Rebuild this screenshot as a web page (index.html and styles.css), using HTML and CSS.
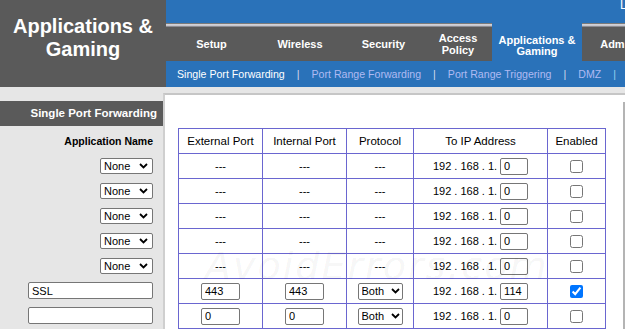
FILE: index.html
```html
<!DOCTYPE html>
<html>
<head>
  <meta charset="utf-8">
  <link rel="stylesheet" href="styles.css">
</head>
<body>
  <div class="header">
    <div class="page-title">Applications &amp;<br>Gaming</div>
    <div class="nav">
      <div class="brand-strip">Linksys E1200</div>
      <div class="tabs">
        <div class="tab tab-setup">Setup</div>
        <div class="tab tab-wireless">Wireless</div>
        <div class="tab tab-security">Security</div>
        <div class="tab tab-access">Access<br>Policy</div>
        <div class="tab tab-apps active">Applications &amp;<br>Gaming</div>
        <div class="tab tab-admin">Administration</div>
      </div>
      <div class="subnav">
        <span class="sub current">Single Port Forwarding</span>
        <span class="sep">|</span>
        <span class="sub">Port Range Forwarding</span>
        <span class="sep">|</span>
        <span class="sub">Port Range Triggering</span>
        <span class="sep">|</span>
        <span class="sub">DMZ</span>
        <span class="sep sep-last">|</span>
        <span class="sub">QoS</span>
      </div>
    </div>
  </div>

  <div class="main">
    <div class="side">
      <div class="side-title">Single Port Forwarding</div>
      <div class="side-row side-head">Application Name</div>
      <div class="side-row"><select class="app-select"><option>None</option></select></div>
      <div class="side-row"><select class="app-select"><option>None</option></select></div>
      <div class="side-row"><select class="app-select"><option>None</option></select></div>
      <div class="side-row"><select class="app-select"><option>None</option></select></div>
      <div class="side-row"><select class="app-select"><option>None</option></select></div>
      <div class="side-row"><input type="text" class="app-input" value="SSL"></div>
      <div class="side-row"><input type="text" class="app-input" value=""></div>
    </div>

    <div class="panel">
      <div class="content">
        <table class="ports">
          <colgroup>
            <col class="c-ext">
            <col class="c-int">
            <col class="c-proto">
            <col class="c-ip">
            <col class="c-en">
          </colgroup>
          <tr>
            <th>External Port</th>
            <th>Internal Port</th>
            <th>Protocol</th>
            <th>To IP Address</th>
            <th>Enabled</th>
          </tr>
          <tr>
            <td>---</td><td>---</td><td>---</td>
            <td><span class="ip">192 . 168 . 1.</span><input type="text" class="ip-input" value="0"></td>
            <td><input type="checkbox" class="check"></td>
          </tr>
          <tr>
            <td>---</td><td>---</td><td>---</td>
            <td><span class="ip">192 . 168 . 1.</span><input type="text" class="ip-input" value="0"></td>
            <td><input type="checkbox" class="check"></td>
          </tr>
          <tr>
            <td>---</td><td>---</td><td>---</td>
            <td><span class="ip">192 . 168 . 1.</span><input type="text" class="ip-input" value="0"></td>
            <td><input type="checkbox" class="check"></td>
          </tr>
          <tr>
            <td>---</td><td>---</td><td>---</td>
            <td><span class="ip">192 . 168 . 1.</span><input type="text" class="ip-input" value="0"></td>
            <td><input type="checkbox" class="check"></td>
          </tr>
          <tr>
            <td>---</td><td>---</td><td>---</td>
            <td><span class="ip">192 . 168 . 1.</span><input type="text" class="ip-input" value="0"></td>
            <td><input type="checkbox" class="check"></td>
          </tr>
          <tr>
            <td><input type="text" class="port-input" value="443"></td>
            <td><input type="text" class="port-input" value="443"></td>
            <td><select class="proto-select"><option>Both</option></select></td>
            <td><span class="ip">192 . 168 . 1.</span><input type="text" class="ip-input" value="114"></td>
            <td><input type="checkbox" class="check" checked></td>
          </tr>
          <tr>
            <td><input type="text" class="port-input" value="0"></td>
            <td><input type="text" class="port-input" value="0"></td>
            <td><select class="proto-select"><option>Both</option></select></td>
            <td><span class="ip">192 . 168 . 1.</span><input type="text" class="ip-input" value="0"></td>
            <td><input type="checkbox" class="check"></td>
          </tr>
        </table>
      </div>
      <div class="help"></div>
    </div>
  </div>

  <div class="watermark">AvoidErrors.com</div>
</body>
</html>
```

FILE: styles.css
```css
body {
  margin: 0;
  width: 625px;
  height: 329px;
  overflow: hidden;
  background: #e6e6e6;
  font-family: "Liberation Sans", Arial, sans-serif;
  color: #000;
}

.header {
  display: flex;
  height: 87px;
}

.page-title {
  width: 166px;
  flex: none;
  box-sizing: border-box;
  padding-top: 15px;
  background: #5a5a5a;
  color: #fff;
  font-size: 20px;
  font-weight: bold;
  line-height: 23px;
  text-align: center;
}

.nav {
  flex: 1;
  display: flex;
  flex-direction: column;
  overflow: hidden;
}

.brand-strip {
  height: 23px;
  background: #2a72b9;
  color: #fff;
  font-size: 12px;
  line-height: 10px;
  padding-left: 454px;
  white-space: nowrap;
  overflow: hidden;
}

.tabs {
  display: flex;
  height: 38px;
  white-space: nowrap;
}

.tab {
  flex: none;
  display: flex;
  align-items: center;
  justify-content: center;
  box-sizing: border-box;
  padding-top: 4px;
  background: linear-gradient(#7a7a7a 0, #7a7a7a 1px, #d6d6dc 1px, #c2c2c8 3px, #8c8c92 3px, #8c8c92 4px, #5a5a5a 4px);
  color: #fff;
  font-size: 11px;
  font-weight: bold;
  line-height: 12px;
  text-align: center;
}

.tab.active {
  background: #2a72b9;
  padding-top: 8px;
  line-height: 11px;
}

.tab-setup { width: 91px; }
.tab-wireless { width: 86px; }
.tab-security { width: 81px; }
.tab-access { width: 68px; }
.tab-apps { width: 90px; }
.tab-admin { width: 114px; }

.subnav {
  display: flex;
  align-items: center;
  gap: 12px;
  height: 26px;
  padding-left: 11px;
  background: #2a72b9;
  font-size: 10.6px;
  white-space: nowrap;
}

.sub {
  color: #b0baf2;
}

.sub.current {
  color: #fff;
}

.sep {
  color: #d6dcec;
}

.sep-last {
  color: #9ed0f2;
}

.main {
  display: flex;
  height: 242px;
}

.side {
  width: 163px;
  flex: none;
  padding-top: 14px;
}

.side-title {
  height: 25px;
  margin-bottom: 2px;
  padding-right: 6px;
  background: #5a5a5a;
  color: #fff;
  font-size: 11.5px;
  font-weight: bold;
  line-height: 25px;
  text-align: right;
}

.side-row {
  display: flex;
  align-items: center;
  justify-content: flex-end;
  height: 25px;
  padding-right: 10px;
}

.side-head {
  font-size: 10.5px;
  font-weight: bold;
}

/* selects drawn by hand so the chevron sits like the router's page */
.app-select,
.proto-select {
  appearance: none;
  -webkit-appearance: none;
  box-sizing: border-box;
  margin: 0;
  border: 1px solid #767676;
  border-radius: 2px;
  background: #fff url("data:image/svg+xml,%3Csvg xmlns='http://www.w3.org/2000/svg' width='9' height='6' viewBox='0 0 9 6'%3E%3Cpath d='M1 1l3.5 3.5L8 1' fill='none' stroke='%23000' stroke-width='1.8'/%3E%3C/svg%3E") no-repeat;
  color: #000;
  font-family: "Liberation Sans", Arial, sans-serif;
  font-size: 11px;
}

.app-select {
  width: 53px;
  height: 16px;
  padding: 0 0 0 3px;
  background-position: right 4px center;
}

.proto-select {
  width: 45px;
  height: 17px;
  padding: 0 0 0 3px;
  background-position: right 2px center;
  vertical-align: middle;
}

.app-input {
  box-sizing: border-box;
  width: 125px;
  height: 17px;
  margin: 0;
  padding: 0 3px;
  border: 1px solid #767676;
  border-radius: 2px;
  font-family: "Liberation Sans", Arial, sans-serif;
  font-size: 11px;
}

.panel {
  flex: 1;
  display: flex;
  margin-top: 6px;
  background: #fff;
  border-top: 2px solid #c6c6c6;
  border-left: 2px solid #cfcfcf;
}

.content {
  width: 458px;
  flex: none;
  box-sizing: border-box;
  padding: 33px 0 0 13px;
}

.help {
  flex: 1;
  margin-top: 7px;
  border-left: 2px solid #b4b4b4;
}

.ports {
  border-collapse: collapse;
  table-layout: fixed;
  width: 428px;
}

.c-ext { width: 84px; }
.c-int { width: 84px; }
.c-proto { width: 67px; }
.c-ip { width: 134px; }
.c-en { width: 58px; }

.ports th,
.ports td {
  height: 24px;
  padding: 0;
  border: 1px solid #6a66d0;
  text-align: center;
  white-space: nowrap;
}

.ports th {
  font-size: 11.5px;
  font-weight: normal;
}

.ports td {
  font-size: 11px;
}

.ip {
  margin-right: 3px;
  vertical-align: middle;
}

.ip-input,
.port-input {
  box-sizing: border-box;
  height: 17px;
  margin: 0;
  padding: 0 3px;
  border: 1px solid #767676;
  border-radius: 2px;
  font-family: "Liberation Sans", Arial, sans-serif;
  font-size: 11px;
  vertical-align: middle;
}

.ip-input {
  width: 28px;
}

.port-input {
  width: 39px;
}

.check {
  width: 13px;
  height: 13px;
  margin: 0;
  vertical-align: middle;
}

.watermark {
  position: absolute;
  left: 205px;
  top: 244px;
  font-family: "DejaVu Sans", sans-serif;
  font-size: 38px;
  font-style: italic;
  font-weight: 200;
  color: rgba(0, 0, 0, 0.05);
  letter-spacing: 2px;
  pointer-events: none;
  white-space: nowrap;
}
```
